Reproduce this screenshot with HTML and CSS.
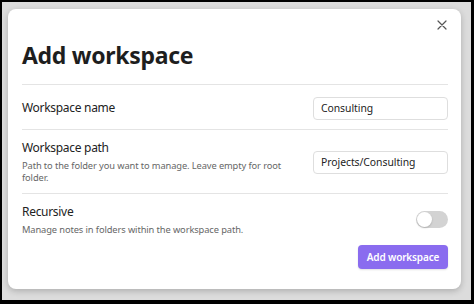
FILE: index.html
```html
<!DOCTYPE html>
<html>
<head>
<meta charset="utf-8">
<link rel="stylesheet" href="styles.css">
</head>
<body>
<div class="frame">
  <div class="modal">
    <button class="close" aria-label="Close">
      <svg width="10" height="10" viewBox="0 0 10 10"><path d="M1 1L9 9M9 1L1 9" stroke="#555" stroke-width="1.2" stroke-linecap="round" fill="none"/></svg>
    </button>
    <h1 class="title">Add workspace</h1>
    <div class="setting">
      <div class="info">
        <div class="name">Workspace name</div>
      </div>
      <div class="control"><input class="text" type="text" value="Consulting"></div>
    </div>
    <div class="setting">
      <div class="info">
        <div class="name">Workspace path</div>
        <div class="desc">Path to the folder you want to manage. Leave empty for root folder.</div>
      </div>
      <div class="control"><input class="text" type="text" value="Projects/Consulting"></div>
    </div>
    <div class="setting last">
      <div class="info">
        <div class="name">Recursive</div>
        <div class="desc">Manage notes in folders within the workspace path.</div>
      </div>
      <div class="control"><div class="toggle"><div class="knob"></div></div></div>
    </div>
    <div class="actions">
      <button class="cta">Add workspace</button>
    </div>
  </div>
</div>
</body>
</html>
```
FILE: styles.css
```css
html, body {
  margin: 0;
  padding: 0;
  background: #000;
  width: 474px;
  height: 304px;
  overflow: hidden;
  font-family: "Noto Sans", "Open Sans", sans-serif;
}
.frame {
  margin: 2px 3px 4px 2px;
  height: 298px;
  box-sizing: border-box;
  background: #dcdcdc;
  padding: 7px 10px 11px 6px;
}
.modal {
  position: relative;
  height: 280px;
  box-sizing: border-box;
  background: #fff;
  border-radius: 8px;
  box-shadow: 0 2px 6px rgba(0,0,0,0.22);
  padding: 31px 13px 0 14px;
  color: #222;
}
.close {
  position: absolute;
  top: 5px;
  right: 8px;
  width: 22px;
  height: 22px;
  border: 0;
  background: none;
  padding: 0;
  display: flex;
  align-items: center;
  justify-content: center;
}
.title {
  margin: 0 0 14px;
  font-size: 23px;
  line-height: 30px;
  font-weight: 700;
  color: #1e1e1e;
  letter-spacing: -0.3px;
}
.setting {
  display: flex;
  align-items: center;
  border-top: 1px solid #e4e4e4;
  padding: 10px 0 9px;
}
.info {
  flex: 1;
  margin-right: 16px;
}
.name {
  font-size: 12px;
  line-height: 15px;
  letter-spacing: -0.3px;
  color: #222;
}
.desc {
  margin-top: 5px;
  font-size: 9.3px;
  line-height: 12px;
  letter-spacing: -0.1px;
  color: #666;
}
.text {
  box-sizing: border-box;
  width: 135px;
  height: 23px;
  border: 1px solid #dedede;
  border-radius: 4px;
  padding: 0 7px;
  font-family: "Noto Sans", sans-serif;
  font-size: 10.4px;
  letter-spacing: -0.05px;
  color: #222;
  background: #fff;
  outline: none;
}
.toggle {
  width: 32px;
  height: 17px;
  border-radius: 9px;
  background: #d3d3d3;
  position: relative;
}
.knob {
  position: absolute;
  left: 1px;
  top: 1px;
  width: 15px;
  height: 15px;
  border-radius: 50%;
  background: #fff;
  box-shadow: 0 1px 2px rgba(0,0,0,0.18);
}
.actions {
  display: flex;
  justify-content: flex-end;
}
.cta {
  width: 90px;
  height: 24px;
  border: 0;
  border-radius: 4px;
  background: #8a6cef;
  color: #fff;
  font-family: "Noto Sans", sans-serif;
  font-size: 10px;
  font-weight: 600;
  letter-spacing: -0.15px;
  padding: 0;
  box-shadow: 0 1px 2px rgba(0,0,0,0.12);
}
```
